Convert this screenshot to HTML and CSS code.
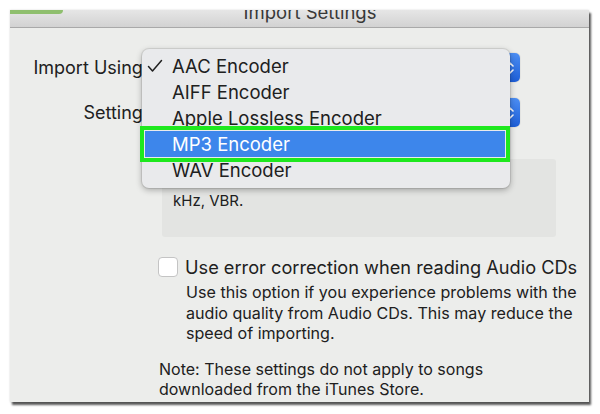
FILE: index.html
```html
<!DOCTYPE html>
<html>
<head>
<meta charset="utf-8">
<link rel="stylesheet" href="styles.css">
</head>
<body>
<div class="window">
  <div class="titlebar">
    <div class="tab"></div>
    <span class="title">Import Settings</span>
  </div>
  <div class="content">
    <div class="row">
      <div class="label">Import Using:</div>
      <div class="popup"><span class="stepper"><svg width="10" height="16" viewBox="0 0 10 16"><path d="M2 6 L5 3 L8 6 M2 10 L5 13 L8 10" fill="none" stroke="#fff" stroke-width="1.6" stroke-linecap="round" stroke-linejoin="round"/></svg></span></div>
    </div>
    <div class="row row2">
      <div class="label">Setting:</div>
      <div class="popup"><span class="stepper"><svg width="10" height="16" viewBox="0 0 10 16"><path d="M2 6 L5 3 L8 6 M2 10 L5 13 L8 10" fill="none" stroke="#fff" stroke-width="1.6" stroke-linecap="round" stroke-linejoin="round"/></svg></span></div>
    </div>
    <div class="details">kHz, VBR.</div>
    <div class="check-row">
      <span class="checkbox"></span>
      <span class="check-label">Use error correction when reading Audio CDs</span>
    </div>
    <p class="help">Use this option if you experience problems with the<br>audio quality from Audio CDs. This may reduce the<br>speed of importing.</p>
    <p class="note">Note: These settings do not apply to songs<br>downloaded from the iTunes Store.</p>
  </div>
  <div class="menu">
    <div class="item"><span class="mark"><svg width="16" height="14" viewBox="0 0 16 14"><path d="M1.5 7.5 L5.5 12 L14.5 1.5" fill="none" stroke="#202020" stroke-width="1.5" stroke-linecap="round" stroke-linejoin="round"/></svg></span>AAC Encoder</div>
    <div class="item"><span class="mark"></span>AIFF Encoder</div>
    <div class="item"><span class="mark"></span>Apple Lossless Encoder</div>
    <div class="item selected"><span class="mark"></span>MP3 Encoder</div>
    <div class="item"><span class="mark"></span>WAV Encoder</div>
  </div>
</div>
</body>
</html>
```
FILE: styles.css
```css
html, body {
  margin: 0;
  padding: 0;
  background: #ffffff;
}
body {
  font-family: Inter, "Liberation Sans", sans-serif;
  color: #202020;
  width: 600px;
  height: 414px;
  overflow: hidden;
}
.window {
  position: relative;
  margin: 10px 0 0 10px;
  width: 579px;
  height: 392px;
  background: #ecedeb;
  box-shadow: 2px 3px 2px rgba(0,0,0,0.65), 0 0 2px rgba(0,0,0,0.15);
}
.titlebar {
  position: relative;
  height: 17px;
  background: linear-gradient(#e6e6e6, #d2d2d2);
  border-bottom: 1px solid #a9a9a9;
  overflow: hidden;
  text-align: center;
}
.tab {
  position: absolute;
  left: 0;
  top: 0;
  width: 53px;
  height: 4px;
  background: #8fbf6e;
  border-bottom-right-radius: 4px;
}
.title {
  display: block;
  font-size: 18.5px;
  line-height: 5px;
  color: #383838;
  padding-left: 21px;
}
.content {
  padding: 25px 0 0 0;
}
.row {
  display: grid;
  grid-template-columns: 138px 362px;
  column-gap: 10px;
  align-items: center;
  height: 29px;
}
.row2 {
  margin-top: 16px;
}
.label {
  text-align: right;
  font-size: 18px;
  white-space: nowrap;
}
.popup {
  height: 29px;
  background: #ffffff;
  border-radius: 5px;
  box-shadow: 0 0 1px rgba(0,0,0,0.4);
  display: flex;
  justify-content: flex-end;
}
.stepper {
  width: 20px;
  height: 29px;
  border-radius: 5px;
  background: linear-gradient(#4c8ef3, #1d5ed7);
  display: flex;
  align-items: center;
  justify-content: center;
}
.details {
  margin: 32px 0 0 152px;
  width: 394px;
  height: 78px;
  box-sizing: border-box;
  padding: 32px 11px 0 11px;
  background: #e3e4e2;
  border-radius: 3px;
  font-size: 15px;
  line-height: 20px;
}
.check-row {
  display: flex;
  align-items: center;
  margin: 20px 0 0 148px;
  height: 20px;
}
.checkbox {
  width: 18px;
  height: 18px;
  border: 1px solid #c4c4c4;
  border-radius: 4px;
  background: #ffffff;
  flex: none;
}
.check-label {
  margin-left: 7px;
  font-size: 18.2px;
  white-space: nowrap;
}
.help {
  margin: 5px 0 0 176px;
  font-size: 16.1px;
  line-height: 20.5px;
  white-space: nowrap;
}
.note {
  margin: 15px 0 0 149px;
  font-size: 16px;
  line-height: 20px;
  white-space: nowrap;
}
.menu {
  position: absolute;
  left: 132px;
  top: 39px;
  width: 368px;
  height: 139px;
  box-sizing: border-box;
  padding: 4px 0 5px 0;
  background: #e9eaec;
  border-radius: 7px;
  box-shadow: 0 2px 6px rgba(0,0,0,0.3), 0 0 0 1px rgba(0,0,0,0.08);
  z-index: 5;
}
.item {
  display: flex;
  align-items: center;
  height: 26px;
  font-size: 18.5px;
  color: #202020;
  margin: 0 5px 0 3px;
  padding-left: 2px;
}
.mark {
  width: 25px;
  flex: none;
  display: flex;
  align-items: center;
}
.selected {
  background: #3d86eb;
  color: #ffffff;
  outline: 4px solid #1ee81e;
  outline-offset: 1px;
  position: relative;
  z-index: 1;
}
```
